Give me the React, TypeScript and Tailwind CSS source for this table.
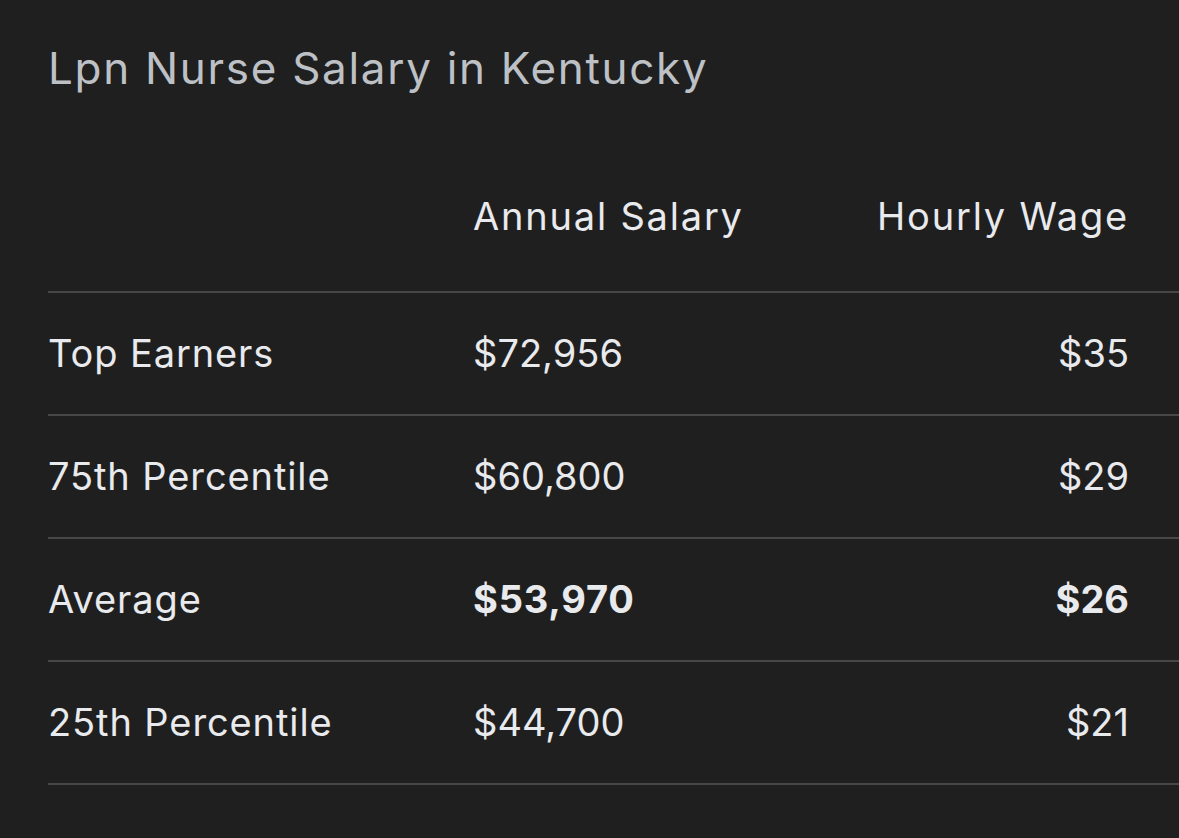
import React from 'react';

const rows = [
  { label: 'Top Earners', annual: '$72,956', hourly: '$35' },
  { label: '75th Percentile', annual: '$60,800', hourly: '$29' },
  { label: 'Average', annual: '$53,970', hourly: '$26', bold: true },
  { label: '25th Percentile', annual: '$44,700', hourly: '$21' },
];

export default function App() {
  return (
    <div className="min-h-[838px] w-full bg-[#1f1f1f] pl-[48px] pt-[42px] font-['Inter',sans-serif] text-[#e8eaed]">
      <h1 className="text-[44px] leading-[52px] tracking-[1.7px] text-[#bdc1c6]">Lpn Nurse Salary in Kentucky</h1>

      <div className="mt-[48px]">
        {/* header */}
        <div className="grid h-[151px] grid-cols-[425px_1fr_auto] items-center border-b-2 border-[#474747] pr-[50px] text-[38px] tracking-[1.8px]">
          <div />
          <div>Annual Salary</div>
          <div className="text-right">Hourly Wage</div>
        </div>

        {rows.map((r) => (
          <div
            key={r.label}
            className="grid h-[123px] grid-cols-[425px_1fr_auto] items-center border-b-2 border-[#474747] pr-[50px] text-[38px]"
          >
            <div className="tracking-[0.9px]">{r.label}</div>
            <div className={r.bold ? 'font-bold tracking-[0.8px]' : ''}>{r.annual}</div>
            <div className={r.bold ? 'text-right font-bold' : 'text-right'}>{r.hourly}</div>
          </div>
        ))}
      </div>
    </div>
  );
}
